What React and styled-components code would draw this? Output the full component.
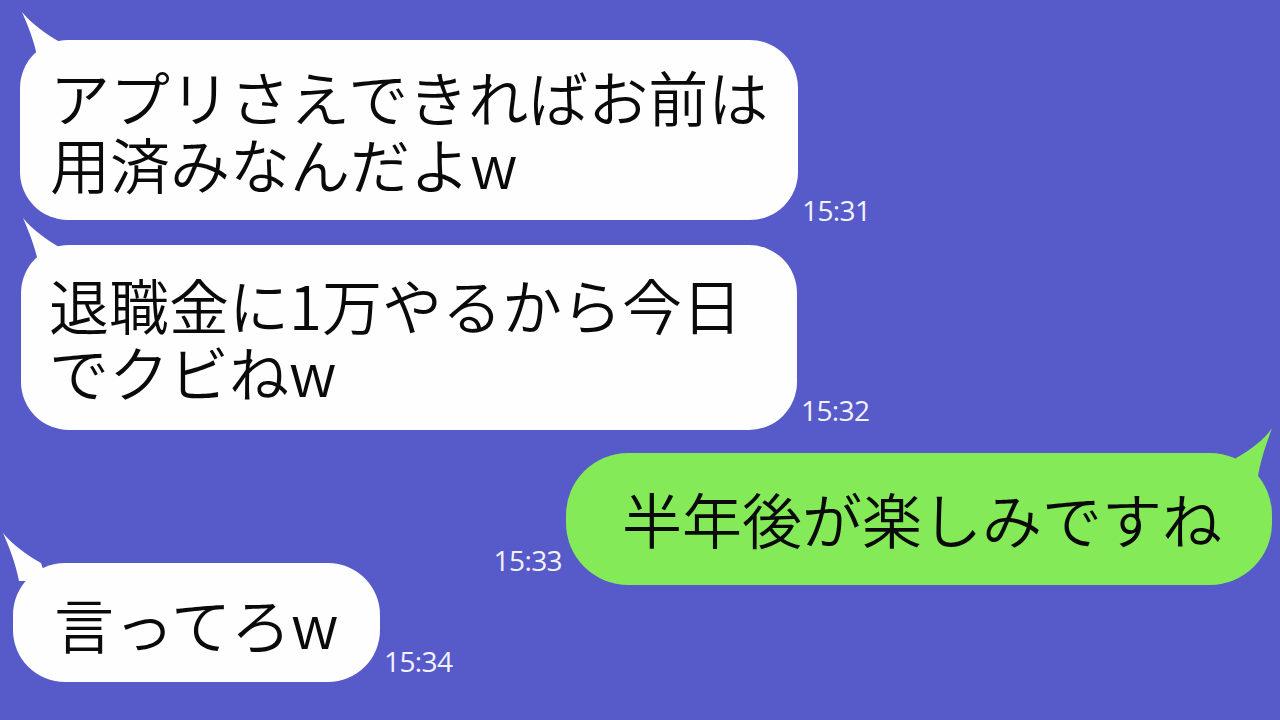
import React from "react";
import styled, { createGlobalStyle } from "styled-components";

const Global = createGlobalStyle`
  html, body { margin: 0; padding: 0; }
  body {
    width: 1280px;
    height: 720px;
    overflow: hidden;
    background: #575ac9;
  }
`;

const Screen = styled.div`
  width: 1280px;
  height: 720px;
  box-sizing: border-box;
  padding-top: 40px;
  background: #575ac9;
  display: flex;
  flex-direction: column;
  font-family: "Noto Sans CJK JP", "Noto Sans", sans-serif;
`;

const Row = styled.div`
  display: flex;
  align-items: flex-end;
  gap: 4px;
  justify-content: ${(p) => (p.$mine ? "flex-end" : "flex-start")};
  padding-left: ${(p) => p.$left || 0}px;
  padding-right: ${(p) => p.$right || 0}px;
  margin-top: ${(p) => p.$mt || 0}px;
`;

const Bubble = styled.div`
  position: relative;
  box-sizing: border-box;
  width: ${(p) => p.$w}px;
  padding: ${(p) => p.$pad};
  background: ${(p) => (p.$mine ? "#84ea58" : "#fefefe")};
  border-radius: ${(p) => p.$r}px;
  color: #0a0a0a;
  font-size: 60px;
  font-weight: 350;
  line-height: 67px;
  white-space: nowrap;
`;

const Line = styled.div``;

const Tail = styled.svg`
  position: absolute;
  top: ${(p) => p.$top}px;
  ${(p) => (p.$mine ? `right: ${p.$x}px;` : `left: ${p.$x}px;`)}
  width: 50px;
  height: 52px;
  overflow: visible;
`;

const Time = styled.span`
  font-family: "Open Sans", sans-serif;
  font-size: 28px;
  line-height: 28px;
  color: #f2f2ff;
  margin-bottom: ${(p) => p.$mb}px;
  letter-spacing: -0.6px;
`;

const LEFT_TAIL = "M2 2 C 8 16, 14 30, 18 50 L 46 50 L 40 32 C 26 24, 12 14, 2 2 Z";
const RIGHT_TAIL = "M48 2 C 44 14, 38 28, 34 50 L 4 50 L 12 32 C 26 24, 40 14, 48 2 Z";

function BubbleTail({ mine, x, top }) {
  return (
    <Tail $mine={mine} $x={x} $top={top} viewBox="0 0 50 52">
      <path d={mine ? RIGHT_TAIL : LEFT_TAIL} fill={mine ? "#84ea58" : "#fefefe"} />
    </Tail>
  );
}

export default function App() {
  return (
    <>
      <Global />
      <Screen>
        <Row $left={20}>
          <Bubble $w={778} $r={48} $pad="22px 0 24px 30px">
            <BubbleTail x={0} top={-30} />
            <Line>アプリさえできればお前は</Line>
            <Line>用済みなんだよw</Line>
          </Bubble>
          <Time $mb={-4}>15:31</Time>
        </Row>
        <Row $left={21} $mt={25}>
          <Bubble $w={776} $r={48} $pad="25px 0 26px 28px">
            <BubbleTail x={0} top={-29} />
            <Line>退職金に1万やるから今日</Line>
            <Line>でクビねw</Line>
          </Bubble>
          <Time $mb={6}>15:32</Time>
        </Row>
        <Row $mine $right={8} $mt={23}>
          <Time $mb={11}>15:33</Time>
          <Bubble $mine $w={706} $r={62} $pad="31px 0 34px 56px">
            <BubbleTail mine x={-2} top={-27} />
            <Line>半年後が楽しみですね</Line>
          </Bubble>
        </Row>
        <Row $left={13} $mt={-22}>
          <Bubble $w={367} $r={52} $pad="26px 0 26px 41px">
            <BubbleTail x={-12} top={-32} />
            <Line>言ってろw</Line>
          </Bubble>
          <Time $mb={7}>15:34</Time>
        </Row>
      </Screen>
    </>
  );
}
